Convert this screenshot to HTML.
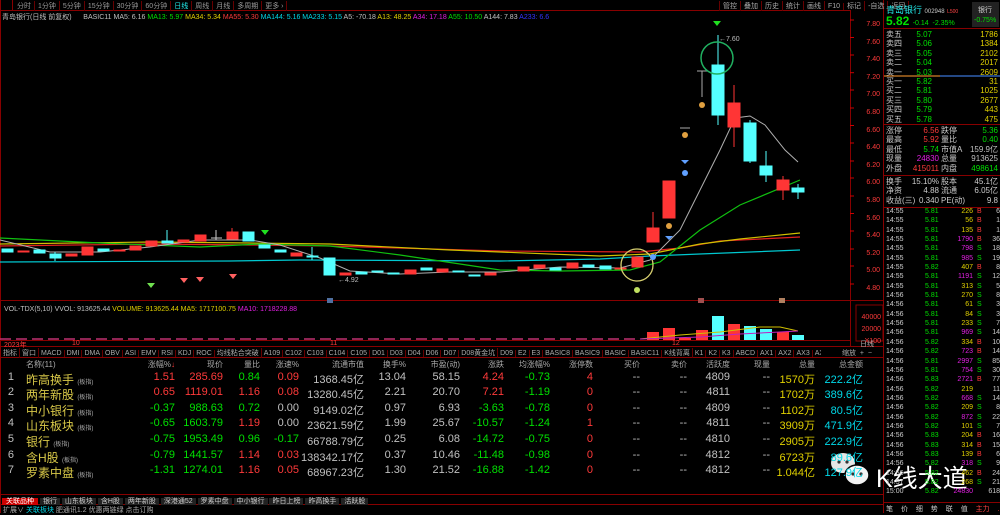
<!DOCTYPE html>
<html><head><meta charset="utf-8"><style>
*{margin:0;padding:0;box-sizing:border-box}
body{width:1000px;height:513px;background:#000;overflow:hidden;position:relative;font-family:"Liberation Sans","Noto Sans CJK SC",sans-serif;color:#c0c0c0}
.a{position:absolute;white-space:nowrap}
.r{position:absolute;white-space:nowrap;text-align:right}
.t7{font-size:7px}.t8{font-size:8px}
.red{color:#ff3a3a}.grn{color:#00e000}.yel{color:#e0d000}.cy{color:#00d8e8}.mag{color:#e020e0}.gry{color:#c0c0c0}
.tb span{display:inline-block;padding:0 3px;border-right:1px solid #600}
.tb2 span{display:inline-block;padding:0 2px;border-right:1px solid #600}
.row{position:absolute;left:0;width:870px;height:15px;font-size:11px}
.row span{position:absolute;text-align:right;width:70px;top:0}
.nm{color:#d8c848;font-size:12px}
</style></head><body>

<svg class="a" style="left:0;top:0" width="1000" height="513">
<line x1="0" y1="10.5" x2="850" y2="10.5" stroke="#800" />
<line x1="883.5" y1="0" x2="883.5" y2="513" stroke="#800"/>
<line x1="850.5" y1="10" x2="850.5" y2="347" stroke="#800"/>
<line x1="0" y1="300.5" x2="883" y2="300.5" stroke="#800"/>
<line x1="0" y1="340.5" x2="850" y2="340.5" stroke="#800"/>
<line x1="0" y1="346.5" x2="883" y2="346.5" stroke="#800"/>
<line x1="0" y1="357.5" x2="883" y2="357.5" stroke="#800"/>
<line x1="0" y1="494.5" x2="883" y2="494.5" stroke="#800"/>
<line x1="0" y1="504.5" x2="883" y2="504.5" stroke="#800"/>
<line x1="0.5" y1="0" x2="0.5" y2="513" stroke="#800"/>
<line x1="12.5" y1="0" x2="12.5" y2="10" stroke="#800"/>
<rect x="856" y="305" width="27" height="36" fill="none" stroke="#800"/>
<line x1="884" y1="28.5" x2="1000" y2="28.5" stroke="#800"/>
<line x1="884" y1="76" x2="940" y2="76" stroke="#b06a20" stroke-width="1.5"/>
<line x1="940" y1="76" x2="1000" y2="76" stroke="#3060b0" stroke-width="1.5"/>
<line x1="884" y1="124.5" x2="1000" y2="124.5" stroke="#800"/>
<line x1="884" y1="175.5" x2="1000" y2="175.5" stroke="#800"/>
<line x1="884" y1="207.5" x2="1000" y2="207.5" stroke="#800"/>
<line x1="884" y1="502.5" x2="1000" y2="502.5" stroke="#800"/>
<g stroke="#c00">
<line x1="850" y1="20" x2="854" y2="20"/><line x1="850" y1="37.5" x2="854" y2="37.5"/><line x1="850" y1="55" x2="854" y2="55"/><line x1="850" y1="72.7" x2="854" y2="72.7"/><line x1="850" y1="90" x2="854" y2="90"/><line x1="850" y1="108" x2="854" y2="108"/><line x1="850" y1="125.5" x2="854" y2="125.5"/><line x1="850" y1="143" x2="854" y2="143"/><line x1="850" y1="161" x2="854" y2="161"/><line x1="850" y1="178" x2="854" y2="178"/><line x1="850" y1="196" x2="854" y2="196"/><line x1="850" y1="213.5" x2="854" y2="213.5"/><line x1="850" y1="231" x2="854" y2="231"/><line x1="850" y1="249" x2="854" y2="249"/><line x1="850" y1="266" x2="854" y2="266"/><line x1="850" y1="284" x2="854" y2="284"/>
</g>
<polyline fill="none" stroke="#00c8d0" stroke-width="1.2" points="0,262 230,261 300,260 500,261 600,259 650,256 700,254 800,250"/>
<polyline fill="none" stroke="#e02020" stroke-width="1.2" points="0,246 150,244 250,245 330,246 500,251 640,252 680,248 720,241 800,237"/>
<polyline fill="none" stroke="#d0c000" stroke-width="1.2" points="0,244 150,242 250,243 330,244 450,250 600,256 650,254 700,244 740,239 800,233"/>
<polyline fill="none" stroke="#10c010" stroke-width="1.2" points="0,238 100,243 200,247 260,244 330,246 400,255 500,270 560,271 630,270 660,262 700,230 740,205 800,180"/>
<polyline fill="none" stroke="#b0b0b0" stroke-width="1" points="0,240 50,252 100,252 150,247 200,240 250,240 280,245 320,258 350,271 400,274 450,272 500,272 560,267 620,268 650,260 680,230 700,190 720,150 735,118 750,116 765,125 785,150 798,162"/>
<g stroke-width="1">
<g fill="#54ffff" stroke="#54ffff">
<rect x="2" y="249" width="11" height="3"/><rect x="34" y="250" width="11" height="3"/><rect x="50" y="254" width="11" height="4"/><line x1="55" y1="252" x2="55" y2="261"/>
<rect x="98" y="249" width="11" height="2"/><rect x="162" y="241" width="11" height="2"/><line x1="167" y1="230" x2="167" y2="243"/>
<rect x="243" y="232" width="11" height="9"/><rect x="259" y="245" width="11" height="3"/><rect x="275" y="250" width="11" height="2"/>
<rect x="307" y="256" width="11" height="1"/><line x1="312" y1="247" x2="312" y2="260"/>
<rect x="324" y="258" width="11" height="17"/><rect x="356" y="272" width="11" height="2"/><rect x="372" y="271" width="11" height="1"/><rect x="388" y="273" width="11" height="1"/><rect x="421" y="268" width="11" height="2"/><rect x="453" y="271" width="11" height="1"/><rect x="469" y="275" width="11" height="1"/>
<rect x="550" y="268" width="11" height="2"/><rect x="583" y="265" width="11" height="2"/><rect x="600" y="266" width="11" height="3"/>
<line x1="718" y1="35" x2="718" y2="125"/><rect x="712" y="65" width="12" height="50"/>
<line x1="750" y1="120" x2="750" y2="163"/><rect x="744" y="123" width="12" height="38"/>
<line x1="766" y1="151" x2="766" y2="182"/><rect x="760" y="166" width="12" height="9"/>
<line x1="798" y1="184" x2="798" y2="199"/><rect x="792" y="188" width="12" height="4"/>
</g>
<g fill="#ff3535" stroke="#ff3535">
<rect x="18" y="251" width="11" height="1"/><rect x="66" y="254" width="11" height="2"/><rect x="82" y="247" width="11" height="8"/><rect x="114" y="250" width="11" height="1"/><rect x="130" y="246" width="11" height="4"/><rect x="146" y="241" width="11" height="5"/><rect x="178" y="240" width="11" height="2"/><rect x="195" y="235" width="11" height="6"/><rect x="227" y="232" width="11" height="7"/><line x1="232" y1="228" x2="232" y2="239"/>
<rect x="291" y="253" width="11" height="3"/><rect x="340" y="273" width="11" height="2"/><rect x="405" y="270" width="11" height="4"/><rect x="437" y="269" width="11" height="3"/><rect x="485" y="273" width="11" height="2"/>
<rect x="518" y="267" width="11" height="4"/><rect x="534" y="265" width="11" height="3"/><rect x="567" y="263" width="11" height="5"/><rect x="615" y="268" width="11" height="1"/>
<rect x="632" y="257" width="11" height="10"/>
<line x1="653" y1="212" x2="653" y2="242"/><rect x="647" y="228" width="12" height="14"/>
<rect x="663" y="181" width="12" height="37"/>
<line x1="734" y1="85" x2="734" y2="147"/><rect x="728" y="103" width="12" height="24"/>
<line x1="783" y1="176" x2="783" y2="200"/><rect x="777" y="180" width="12" height="10"/>
</g>
<line x1="211" y1="238" x2="222" y2="238" stroke="#ccc"/><line x1="216" y1="230" x2="216" y2="240" stroke="#ccc"/>
<line x1="697" y1="71" x2="707" y2="71" stroke="#aaa"/><line x1="702" y1="71" x2="702" y2="97" stroke="#aaa"/>
<line x1="680" y1="128" x2="690" y2="128" stroke="#aaa"/>
</g>
<circle cx="637" cy="265" r="16" fill="none" stroke="#d8d070" stroke-width="1.3"/>
<circle cx="717" cy="58" r="16" fill="none" stroke="#20b060" stroke-width="1.5"/>
<path d="M713,21h8l-4,5z" fill="#20e020"/>
<path d="M261,230h8l-4,5z" fill="#20e020"/>
<path d="M147,283h8l-4,5z" fill="#70e050"/>
<path d="M180,278h8l-4,5z M196,277h8l-4,5z M229,274h8l-4,5z" fill="#ff6060"/>
<circle cx="702" cy="105" r="3" fill="#e0a040"/><circle cx="685" cy="135" r="3" fill="#e0a040"/><circle cx="669" cy="226" r="3" fill="#e0a040"/>
<circle cx="685" cy="173" r="3" fill="#60a0ff"/><path d="M681,160h8l-4,4z M665,236h8l-4,4z" fill="#60a0ff"/><circle cx="653" cy="257" r="3" fill="#60a0ff"/>
<circle cx="637" cy="290" r="3" fill="#c0e060"/>
<rect x="327" y="298" width="6" height="5" fill="#5070a0"/><rect x="698" y="298" width="6" height="5" fill="#a05050"/><rect x="779" y="298" width="6" height="5" fill="#b08060"/>
<text x="338" y="282" font-size="7" fill="#bbb">←4.92</text>
<text x="719" y="41" font-size="7" fill="#bbb">←7.60</text>
<line x1="0" y1="339" x2="640" y2="339" stroke="#c03070" stroke-width="1.5" stroke-dasharray="11,5"/>
<g fill="#ff3535"><rect x="647" y="332" width="12" height="8"/><rect x="663" y="328" width="12" height="12"/><rect x="679" y="338" width="12" height="2"/><rect x="696" y="330" width="12" height="10"/><rect x="728" y="324" width="12" height="16"/><rect x="777" y="332" width="12" height="8"/></g>
<g fill="#54ffff"><rect x="712" y="316" width="12" height="24"/><rect x="744" y="326" width="12" height="14"/><rect x="760" y="329" width="12" height="11"/><rect x="792" y="335" width="12" height="5"/></g>
<polyline fill="none" stroke="#d0c000" points="640,339 680,335 720,332 760,327 780,327 798,331"/>
<polyline fill="none" stroke="#c020c0" points="640,339 700,337 740,334 780,332 798,331"/>
<ellipse cx="843" cy="463" rx="12" ry="10" fill="#fff" opacity=".9"/>
<ellipse cx="857" cy="475" rx="12" ry="10" fill="#fff" stroke="#000" stroke-width="1.5" opacity=".95"/>
<circle cx="839" cy="462" r="1.6" fill="#333"/><circle cx="847" cy="462" r="1.6" fill="#333"/><circle cx="853" cy="474" r="1.6" fill="#333"/><circle cx="861" cy="474" r="1.6" fill="#333"/>
</svg>

<div class="a t7 tb" style="left:14px;top:1px;color:#999"><span>分时</span><span>1分钟</span><span>5分钟</span><span>15分钟</span><span>30分钟</span><span>60分钟</span><span style="color:#2ee">日线</span><span>周线</span><span>月线</span><span>多周期</span><span>更多 ›</span></div>
<div class="a t7 tb" style="left:719px;top:1px;color:#aaa;border-left:1px solid #600"><span>管控</span><span>叠加</span><span>历史</span><span>统计</span><span>画线</span><span>F10</span><span>标记</span><span>-自选</span><span>返回</span></div>
<div class="a t7" style="left:2px;top:12px"><span class="gry">青岛银行(日线 前复权)</span>&nbsp;&nbsp;&nbsp;&nbsp;&nbsp;&nbsp;BASIC11 MA5: 6.16 <span class="grn">MA13: 5.97</span> <span class="yel">MA34: 5.34</span> <span class="red">MA55: 5.30</span> <span class="cy">MA144: 5.16 MA233: 5.15</span> A5: -70.18 <span class="yel">A13: 48.25</span> <span class="mag">A34: 17.18</span> <span class="grn">A55: 10.50</span> A144: 7.83 <span style="color:#33f">A233: 6.6</span></div>
<div class="r t7 red" style="left:852px;width:28px;top:16px;line-height:17.6px">7.80<br>7.60<br>7.40<br>7.20<br>7.00<br>6.80<br>6.60<br>6.40<br>6.20<br>6.00<br>5.80<br>5.60<br>5.40<br>5.20<br>5.00<br>4.80</div>
<div class="r t7 red" style="left:856px;width:25px;top:312px;line-height:12px">40000<br>20000<br>X100</div>
<div class="a t7" style="left:4px;top:306px">VOL-TDX(5,10) VVOL: 913625.44 <span class="yel">VOLUME: 913625.44 MA5: 1717100.75</span> <span class="mag">MA10: 1718228.88</span></div>
<div class="a t7 red" style="left:4px;top:340px">2023年</div><div class="a t7 red" style="left:72px;top:340px">10</div><div class="a t7 red" style="left:330px;top:340px">11</div><div class="a t7 red" style="left:672px;top:340px">12</div>
<div class="a t7" style="left:860px;top:339px;color:#aaa">日线</div>
<div class="a t7 tb2" style="left:1px;top:348px;color:#aaa;width:820px;overflow:hidden"><span>指标</span><span>窗口</span><span>MACD</span><span>DMI</span><span>DMA</span><span>OBV</span><span>ASI</span><span>EMV</span><span>RSI</span><span>KDJ</span><span>ROC</span><span>均线粘合突破</span><span>A109</span><span>C102</span><span>C103</span><span>C104</span><span>C105</span><span>D01</span><span>D03</span><span>D04</span><span>D06</span><span>D07</span><span>D08黄金坑</span><span>D09</span><span>E2</span><span>E3</span><span>BASIC8</span><span>BASIC9</span><span>BASIC</span><span>BASIC11</span><span>K线背离</span><span>K1</span><span>K2</span><span>K3</span><span>ABCD</span><span>AX1</span><span>AX2</span><span>AX3</span><span>AX4</span><span>更多</span><span style="color:#2ee">设置</span></div>
<div class="a t7" style="left:842px;top:348px;color:#aaa">缩放 &nbsp;+ &nbsp;−</div>

<div class="row" style="top:359px;font-size:8px;color:#aaa"><span style="text-align:left;left:26px">名称(11)</span><span style="left:105px">涨幅%<b class="red">↓</b></span><span style="left:153px">现价</span><span style="left:190px">量比</span><span style="left:229px">涨速%</span><span style="left:294px">流通市值</span><span style="left:336px">换手%</span><span style="left:390px">市盈(动)</span><span style="left:434px">涨跌</span><span style="left:480px">均涨幅%</span><span style="left:523px">涨停数</span><span style="left:570px">买价</span><span style="left:617px">卖价</span><span style="left:660px">活跃度</span><span style="left:700px">现量</span><span style="left:745px">总量</span><span style="left:793px">总金额</span></div>

<div class="row" style="top:371px"><span style="left:4px;width:10px">1</span><span class="nm" style="left:26px;text-align:left;width:90px">昨高换手 <small style="font-size:6px;color:#aaa">(板指)</small></span><span class="red" style="left:105px">1.51</span><span class="red" style="left:153px">285.69</span><span class="grn" style="left:190px">0.84</span><span class="red" style="left:229px">0.09</span><span style="left:294px">1368.45亿</span><span style="left:336px">13.04</span><span style="left:390px">58.15</span><span class="red" style="left:434px">4.24</span><span class="grn" style="left:480px">-0.73</span><span class="red" style="left:523px">4</span><span style="left:570px">--</span><span style="left:617px">--</span><span style="left:660px">4809</span><span style="left:700px">--</span><span class="yel" style="left:745px">1570万</span><span class="cy" style="left:793px">222.2亿</span></div>
<div class="row" style="top:386px"><span style="left:4px;width:10px">2</span><span class="nm" style="left:26px;text-align:left;width:90px">两年新股 <small style="font-size:6px;color:#aaa">(板指)</small></span><span class="red" style="left:105px">0.65</span><span class="red" style="left:153px">1119.01</span><span class="red" style="left:190px">1.16</span><span class="red" style="left:229px">0.08</span><span style="left:294px">13280.45亿</span><span style="left:336px">2.21</span><span style="left:390px">20.70</span><span class="red" style="left:434px">7.21</span><span class="grn" style="left:480px">-1.19</span><span class="red" style="left:523px">0</span><span style="left:570px">--</span><span style="left:617px">--</span><span style="left:660px">4811</span><span style="left:700px">--</span><span class="yel" style="left:745px">1702万</span><span class="cy" style="left:793px">389.6亿</span></div>
<div class="row" style="top:402px"><span style="left:4px;width:10px">3</span><span class="nm" style="left:26px;text-align:left;width:90px">中小银行 <small style="font-size:6px;color:#aaa">(板指)</small></span><span class="grn" style="left:105px">-0.37</span><span class="grn" style="left:153px">988.63</span><span class="grn" style="left:190px">0.72</span><span style="left:229px">0.00</span><span style="left:294px">9149.02亿</span><span style="left:336px">0.97</span><span style="left:390px">6.93</span><span class="grn" style="left:434px">-3.63</span><span class="grn" style="left:480px">-0.78</span><span class="red" style="left:523px">0</span><span style="left:570px">--</span><span style="left:617px">--</span><span style="left:660px">4809</span><span style="left:700px">--</span><span class="yel" style="left:745px">1102万</span><span class="cy" style="left:793px">80.5亿</span></div>
<div class="row" style="top:417px"><span style="left:4px;width:10px">4</span><span class="nm" style="left:26px;text-align:left;width:90px">山东板块 <small style="font-size:6px;color:#aaa">(板指)</small></span><span class="grn" style="left:105px">-0.65</span><span class="grn" style="left:153px">1603.79</span><span class="red" style="left:190px">1.19</span><span style="left:229px">0.00</span><span style="left:294px">23621.59亿</span><span style="left:336px">1.99</span><span style="left:390px">25.67</span><span class="grn" style="left:434px">-10.57</span><span class="grn" style="left:480px">-1.24</span><span class="red" style="left:523px">1</span><span style="left:570px">--</span><span style="left:617px">--</span><span style="left:660px">4811</span><span style="left:700px">--</span><span class="yel" style="left:745px">3909万</span><span class="cy" style="left:793px">471.9亿</span></div>
<div class="row" style="top:433px"><span style="left:4px;width:10px">5</span><span class="nm" style="left:26px;text-align:left;width:90px">银行 <small style="font-size:6px;color:#aaa">(板指)</small></span><span class="grn" style="left:105px">-0.75</span><span class="grn" style="left:153px">1953.49</span><span class="grn" style="left:190px">0.96</span><span class="grn" style="left:229px">-0.17</span><span style="left:294px">66788.79亿</span><span style="left:336px">0.25</span><span style="left:390px">6.08</span><span class="grn" style="left:434px">-14.72</span><span class="grn" style="left:480px">-0.75</span><span class="red" style="left:523px">0</span><span style="left:570px">--</span><span style="left:617px">--</span><span style="left:660px">4810</span><span style="left:700px">--</span><span class="yel" style="left:745px">2905万</span><span class="cy" style="left:793px">222.9亿</span></div>
<div class="row" style="top:449px"><span style="left:4px;width:10px">6</span><span class="nm" style="left:26px;text-align:left;width:90px">含H股 <small style="font-size:6px;color:#aaa">(板指)</small></span><span class="grn" style="left:105px">-0.79</span><span class="grn" style="left:153px">1441.57</span><span class="red" style="left:190px">1.14</span><span class="red" style="left:229px">0.03</span><span style="left:294px">138342.17亿</span><span style="left:336px">0.37</span><span style="left:390px">10.46</span><span class="grn" style="left:434px">-11.48</span><span class="grn" style="left:480px">-0.98</span><span class="red" style="left:523px">0</span><span style="left:570px">--</span><span style="left:617px">--</span><span style="left:660px">4812</span><span style="left:700px">--</span><span class="yel" style="left:745px">6723万</span><span class="cy" style="left:793px">89.6亿</span></div>
<div class="row" style="top:464px"><span style="left:4px;width:10px">7</span><span class="nm" style="left:26px;text-align:left;width:90px">罗素中盘 <small style="font-size:6px;color:#aaa">(板指)</small></span><span class="grn" style="left:105px">-1.31</span><span class="grn" style="left:153px">1274.01</span><span class="red" style="left:190px">1.16</span><span class="red" style="left:229px">0.05</span><span style="left:294px">68967.23亿</span><span style="left:336px">1.30</span><span style="left:390px">21.52</span><span class="grn" style="left:434px">-16.88</span><span class="grn" style="left:480px">-1.42</span><span class="red" style="left:523px">0</span><span style="left:570px">--</span><span style="left:617px">--</span><span style="left:660px">4812</span><span style="left:700px">--</span><span class="yel" style="left:745px">1.044亿</span><span class="cy" style="left:793px">127.9亿</span></div>

<div class="a" style="left:876px;top:459px;font-size:25px;color:#fff">K线大道</div>

<div class="a t7" style="left:2px;top:496px;color:#ccc"><span style="background:#c00;color:#fff;padding:0 4px">关联品种</span> <span style="background:#222;padding:0 3px">银行</span> <span style="background:#222;padding:0 3px">山东板块</span> <span style="background:#222;padding:0 3px">含H股</span> <span style="background:#222;padding:0 3px">两年新股</span> <span style="background:#222;padding:0 3px">深港通52</span> <span style="background:#222;padding:0 3px">罗素中盘</span> <span style="background:#222;padding:0 3px">中小银行</span> <span style="background:#222;padding:0 3px">昨日上榜</span> <span style="background:#222;padding:0 3px">昨高换手</span> <span style="background:#222;padding:0 3px">活跃股</span></div>
<div class="a t7" style="left:3px;top:505px;color:#aaa">扩展∨ <span class="cy">关联板块</span> 肥通讯1.2 优惠两链绿 点击订购</div>

<div class="a" style="left:886px;top:3px;font-size:9px;color:#2ee">青岛银行 <span style="font-size:6px;color:#ccc">002948</span> <span style="font-size:5px;color:#f44">L500</span></div>
<div class="a" style="left:972px;top:2px;width:27px;height:25px;background:#222"></div>
<div class="a t7" style="left:978px;top:5px;color:#ccc">银行</div>
<div class="a t7 grn" style="left:974px;top:17px">-0.75%</div>
<div class="a grn" style="left:886px;top:14px;font-size:12px;font-weight:bold">5.82 <span style="font-size:7px;font-weight:normal">-0.14 &nbsp;-2.35%</span></div>

<div class="a t8" style="left:886px;top:30px;line-height:9.4px;color:#ccc">卖五<br>卖四<br>卖三<br>卖二<br>卖一</div>
<div class="r t8 grn" style="left:900px;width:32px;top:30px;line-height:9.4px">5.07<br>5.06<br>5.05<br>5.04<br>5.03</div>
<div class="r t8 yel" style="left:960px;width:38px;top:30px;line-height:9.4px">1786<br>1384<br>2102<br>2017<br>2609</div>
<div class="a t8" style="left:886px;top:77px;line-height:9.4px;color:#ccc">买一<br>买二<br>买三<br>买四<br>买五</div>
<div class="r t8 grn" style="left:900px;width:32px;top:77px;line-height:9.4px">5.82<br>5.81<br>5.80<br>5.79<br>5.78</div>
<div class="r t8 yel" style="left:960px;width:38px;top:77px;line-height:9.4px">31<br>1025<br>2677<br>443<br>475</div>
<div class="a t8" style="left:886px;top:126px;line-height:9.4px;color:#ccc">涨停<br>最高<br>最低<br>现量<br>外盘</div>
<div class="r t8" style="left:900px;width:39px;top:126px;line-height:9.4px"><span class="red">6.56</span><br><span class="red">5.92</span><br><span class="grn">5.74</span><br><span class="mag">24830</span><br><span class="red">415011</span></div>
<div class="a t8" style="left:941px;top:126px;line-height:9.4px;color:#ccc">跌停<br>量比<br>市值A<br>总量<br>内盘</div>
<div class="r t8" style="left:960px;width:38px;top:126px;line-height:9.4px"><span class="grn">5.36</span><br><span class="grn">0.40</span><br>159.9亿<br>913625<br><span class="grn">498614</span></div>
<div class="a t8" style="left:886px;top:177px;line-height:9.4px;color:#ccc">换手<br>净资<br>收益(三)</div>
<div class="r t8" style="left:900px;width:39px;top:177px;line-height:9.4px;color:#ccc">15.10%<br>4.88<br>0.340</div>
<div class="a t8" style="left:941px;top:177px;line-height:9.4px;color:#ccc">股本<br>流通<br>PE(动)</div>
<div class="r t8" style="left:960px;width:38px;top:177px;line-height:9.4px;color:#ccc">45.1亿<br>6.05亿<br>9.8</div>

<div class="a t7" style="left:886px;top:207px;line-height:9.35px;color:#ccc">14:55<br>14:55<br>14:55<br>14:55<br>14:55<br>14:55<br>14:55<br>14:55<br>14:55<br>14:56<br>14:56<br>14:56<br>14:56<br>14:56<br>14:56<br>14:56<br>14:56<br>14:56<br>14:56<br>14:56<br>14:56<br>14:56<br>14:56<br>14:56<br>14:56<br>14:56<br>14:56<br>14:56<br>14:56<br>14:57<br>15:00</div>
<div class="a t7 grn" style="left:925px;top:207px;line-height:9.35px">5.81<br>5.81<br>5.81<br>5.81<br>5.81<br>5.81<br>5.82<br>5.81<br>5.81<br>5.81<br>5.81<br>5.81<br>5.81<br>5.81<br>5.82<br>5.82<br>5.81<br>5.81<br>5.83<br>5.82<br>5.82<br>5.82<br>5.82<br>5.82<br>5.83<br>5.83<br>5.83<br>5.82<br>5.82<br>5.82<br>5.82</div>
<div class="r t7" style="left:940px;width:33px;top:207px;line-height:9.35px"><span class="yel">226</span><br><span class="yel">56</span><br><span class="yel">135</span><br><span class="mag">1790</span><br><span class="mag">798</span><br><span class="mag">985</span><br><span class="yel">407</span><br><span class="mag">1191</span><br><span class="yel">313</span><br><span class="yel">270</span><br><span class="yel">61</span><br><span class="yel">84</span><br><span class="yel">233</span><br><span class="mag">969</span><br><span class="yel">334</span><br><span class="mag">723</span><br><span class="mag">2997</span><br><span class="mag">754</span><br><span class="mag">2721</span><br><span class="yel">219</span><br><span class="mag">668</span><br><span class="yel">209</span><br><span class="mag">872</span><br><span class="yel">101</span><br><span class="yel">204</span><br><span class="yel">314</span><br><span class="yel">139</span><br><span class="mag">318</span><br><span class="yel">462</span><br><span class="yel">268</span><br><span class="mag">24830</span></div>
<div class="a t7" style="left:977px;top:207px;line-height:9.35px"><span class="red">B</span><br><span class="red">B</span><br><span class="red">B</span><br><span class="red">B</span><br><span class="grn">S</span><br><span class="grn">S</span><br><span class="red">B</span><br><span class="grn">S</span><br><span class="grn">S</span><br><span class="grn">S</span><br><span class="grn">S</span><br><span class="grn">S</span><br><span class="grn">S</span><br><span class="grn">S</span><br><span class="red">B</span><br><span class="red">B</span><br><span class="grn">S</span><br><span class="grn">S</span><br><span class="red">B</span><br>&nbsp;<br><span class="grn">S</span><br><span class="grn">S</span><br><span class="grn">S</span><br><span class="grn">S</span><br><span class="red">B</span><br><span class="red">B</span><br><span class="red">B</span><br><span class="grn">S</span><br><span class="red">B</span><br><span class="grn">S</span><br>&nbsp;</div>
<div class="r t7" style="left:985px;width:15px;top:207px;line-height:9.35px;color:#ccc">6<br>1<br>1<br>36<br>18<br>19<br>8<br>12<br>5<br>8<br>3<br>3<br>7<br>14<br>10<br>14<br>85<br>30<br>77<br>11<br>14<br>8<br>22<br>7<br>16<br>15<br>6<br>9<br>24<br>21<br>618</div>
<div class="a t7" style="left:886px;top:504px;color:#ccc;word-spacing:6px">笔 价 细 势 联 值 <span style="color:#f44">主力 ...</span></div>
</body></html>
